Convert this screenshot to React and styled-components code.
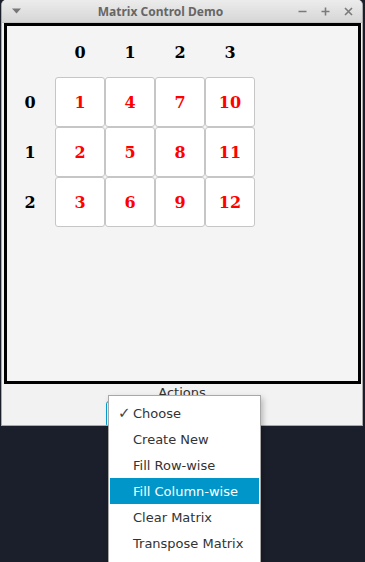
import React from 'react';
import styled, { createGlobalStyle } from 'styled-components';

const GlobalStyle = createGlobalStyle`
  html, body {
    margin: 0;
    padding: 0;
    background: #1b1f2b;
    height: 100%;
    overflow: hidden;
  }
`;

const Screen = styled.div`
  position: relative;
  width: 365px;
  height: 562px;
  padding-left: 1px;
  box-sizing: border-box;
`;

const Window = styled.div`
  width: 362px;
  height: 426px;
  background: #f2f2f2;
  border: 1px solid #a9a9a9;
  border-top: none;
  border-radius: 5px 5px 0 0;
  box-sizing: border-box;
  display: flex;
  flex-direction: column;
  overflow: hidden;
`;

const TitleBar = styled.div`
  height: 23px;
  flex: none;
  display: flex;
  align-items: center;
  padding: 0 8px 0 9px;
  background: linear-gradient(#ececec, #d6d6d6);
  border-bottom: 1px solid #c4c4c4;
  box-sizing: border-box;
`;

const Title = styled.div`
  flex: 1;
  text-align: center;
  padding-left: 2px;
  font-family: "Noto Sans", "Open Sans", sans-serif;
  font-weight: bold;
  font-size: 12px;
  color: #666;
`;

const TitleButtons = styled.div`
  display: flex;
  gap: 12px;
  align-items: center;
`;

const Content = styled.div`
  height: 361px;
  flex: none;
  border: 3px solid #000;
  background: #f4f4f4;
  box-sizing: border-box;
  margin: 0 1px 0 2px;
`;

const Grid = styled.div`
  display: grid;
  grid-template-columns: 46px repeat(4, 50px);
  grid-auto-rows: 50px;
  padding: 1px 0 0 2px;
`;

const Header = styled.div`
  display: flex;
  align-items: center;
  justify-content: center;
  padding-right: ${p => (p.row ? '4px' : '0')};
  font-family: "DejaVu Serif", serif;
  font-weight: bold;
  font-size: 16px;
  color: #000;
`;

const Cell = styled.div`
  display: flex;
  align-items: center;
  justify-content: center;
  background: #fff;
  border: 1px solid #c6c6c6;
  border-radius: 3px;
  box-sizing: border-box;
  font-family: "DejaVu Serif", serif;
  font-weight: bold;
  font-size: 16px;
  color: #ff0000;
`;

const Bottom = styled.div`
  flex: 1;
  display: flex;
  flex-direction: column;
  align-items: center;
  padding-top: 1px;
`;

const Label = styled.div`
  font-family: "DejaVu Sans", sans-serif;
  font-size: 13px;
  color: #333;
  line-height: 15px;
`;

const Combo = styled.div`
  width: 152px;
  height: 26px;
  margin-top: 1px;
  border: 1px solid #039ed3;
  border-radius: 3px;
  background: #fff;
  box-sizing: border-box;
`;

const Popup = styled.div`
  position: absolute;
  left: 108px;
  top: 395px;
  width: 153px;
  height: 180px;
  background: #fff;
  border: 1px solid #a8a8a8;
  box-sizing: border-box;
  padding: 4px 1px 0;
  box-shadow: 2px 3px 6px rgba(0, 0, 0, 0.25);
`;

const Item = styled.div`
  height: 26px;
  display: flex;
  align-items: center;
  padding-left: 8px;
  font-family: "DejaVu Sans", sans-serif;
  font-size: 13px;
  color: ${p => (p.active ? '#fff' : '#333')};
  background: ${p => (p.active ? '#0096c9' : 'transparent')};
`;

const Check = styled.span`
  display: inline-block;
  width: 15px;
  font-size: 15px;
  color: #444;
`;

const Icon = ({ children }) => (
  <svg width="11" height="11" viewBox="0 0 11 11" fill="none" stroke="#7a7a7a" strokeWidth="1.6">
    {children}
  </svg>
);

const cols = [0, 1, 2, 3];
const rows = [0, 1, 2];
const items = ['Create New', 'Fill Row-wise', 'Fill Column-wise', 'Clear Matrix', 'Transpose Matrix'];

export default function App() {
  return (
    <Screen>
      <GlobalStyle />
      <Window>
        <TitleBar>
          <svg width="11" height="8" viewBox="0 0 11 8">
            <path d="M1 1.5 H10 L5.5 6.5 Z" fill="#777" />
          </svg>
          <Title>Matrix Control Demo</Title>
          <TitleButtons>
            <Icon><path d="M1.5 5.5 H9.5" /></Icon>
            <Icon><path d="M1.5 5.5 H9.5 M5.5 1.5 V9.5" /></Icon>
            <Icon><path d="M2 2 L9 9 M9 2 L2 9" /></Icon>
          </TitleButtons>
        </TitleBar>
        <Content>
          <Grid>
            <div />
            {cols.map(c => <Header key={c}>{c}</Header>)}
            {rows.map(r => (
              <React.Fragment key={r}>
                <Header row>{r}</Header>
                {cols.map(c => <Cell key={c}>{c * 3 + r + 1}</Cell>)}
              </React.Fragment>
            ))}
          </Grid>
        </Content>
        <Bottom>
          <Label>Actions</Label>
          <Combo />
        </Bottom>
      </Window>
      <Popup>
        <Item><Check>✓</Check>Choose</Item>
        {items.map(t => (
          <Item key={t} active={t === 'Fill Column-wise'}>
            <Check />{t}
          </Item>
        ))}
      </Popup>
    </Screen>
  );
}
